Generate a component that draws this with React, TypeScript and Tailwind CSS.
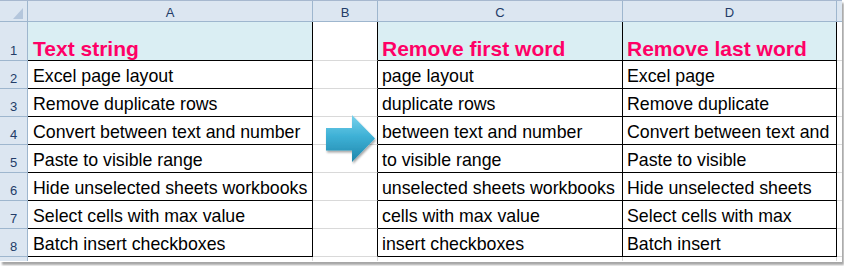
import React from "react";

const rows: [string, string, string][] = [
  ["Excel page layout", "page layout", "Excel page"],
  ["Remove duplicate rows", "duplicate rows", "Remove duplicate"],
  ["Convert between text and number", "between text and number", "Convert between text and"],
  ["Paste to visible range", "to visible range", "Paste to visible"],
  ["Hide unselected sheets workbooks", "unselected sheets workbooks", "Hide unselected sheets"],
  ["Select cells with max value", "cells with max value", "Select cells with max"],
  ["Batch insert checkboxes", "insert checkboxes", "Batch insert"],
];

function Arrow() {
  return (
    <svg
      className="absolute left-[318px] top-[106px]"
      width="66"
      height="64"
      viewBox="0 0 66 64"
    >
      <defs>
        <linearGradient id="ag" x1="0" y1="0" x2="0" y2="1">
          <stop offset="0" stopColor="#7ad2ec" />
          <stop offset="0.45" stopColor="#3eb1d6" />
          <stop offset="1" stopColor="#1f86ab" />
        </linearGradient>
        <filter id="sh" x="-20%" y="-20%" width="140%" height="140%">
          <feGaussianBlur in="SourceAlpha" stdDeviation="1.2" />
          <feOffset dx="0.5" dy="1.5" result="b" />
          <feComponentTransfer>
            <feFuncA type="linear" slope="0.35" />
          </feComponentTransfer>
          <feMerge>
            <feMergeNode />
            <feMergeNode in="SourceGraphic" />
          </feMerge>
        </filter>
      </defs>
      <path
        d="M8 21 L34 21 L34 8 L57 31.5 L34 55 L34 43.5 L8 43.5 Z"
        fill="url(#ag)"
        filter="url(#sh)"
      />
    </svg>
  );
}

export default function App() {
  return (
    <div className="w-[844px] h-[266px] bg-white font-['Liberation_Sans',Arial,sans-serif]">
      <div className="relative w-[842px] h-[262px] bg-white shadow-[2px_3px_2px_rgba(0,0,0,0.35)] border-t border-[#a7b8cf] grid grid-cols-[28px_285px_65px_245px_214px_5px] grid-rows-[21px_39px_repeat(7,28px)_4px] overflow-hidden">
        {/* column header row */}
        <div className="bg-[#dce6f1] border-r border-b border-[#9eb6ce] relative">
          <svg className="absolute left-[12px] top-[6px]" width="12" height="13" viewBox="0 0 12 13">
            <path d="M11 1 L11 12 L1 12 Z" fill="#b4c6dc" />
          </svg>
        </div>
        <div className="bg-[#dce6f1] border-r border-b border-[#9eb6ce] flex items-end justify-center pb-[2px] text-[13px] leading-none text-[#233c68]">A</div>
        <div className="bg-[#dce6f1] border-r border-b border-[#9eb6ce] flex items-end justify-center pb-[2px] text-[13px] leading-none text-[#233c68]">B</div>
        <div className="bg-[#dce6f1] border-r border-b border-[#9eb6ce] flex items-end justify-center pb-[2px] text-[13px] leading-none text-[#233c68]">C</div>
        <div className="bg-[#dce6f1] border-r border-b border-[#9eb6ce] flex items-end justify-center pb-[2px] text-[13px] leading-none text-[#233c68]">D</div>
        <div className="bg-[#dce6f1] border-b border-[#9eb6ce]"></div>

        {/* row 1 */}
        <div className="bg-[#dce6f1] border-r border-b border-[#9eb6ce] flex items-end justify-center pb-[3px] text-[13px] leading-none text-[#233c68]">1</div>
        <div className="bg-[#daeef3] border-r border-b border-black flex items-end pl-[5px] pb-[1px] text-[21px] leading-none font-bold text-[#ff0066] whitespace-nowrap overflow-hidden">Text string</div>
        <div className="bg-white border-r border-black border-b border-b-[#d9d9d9]"></div>
        <div className="bg-[#daeef3] border-r border-b border-black flex items-end pl-[4px] pb-[1px] text-[21px] leading-none font-bold text-[#ff0066] whitespace-nowrap overflow-hidden">Remove first word</div>
        <div className="bg-[#daeef3] border-r border-b border-black flex items-end pl-[4px] pb-[1px] text-[21px] leading-none font-bold text-[#ff0066] whitespace-nowrap overflow-hidden">Remove last word</div>
        <div className="bg-white border-b border-[#d9d9d9]"></div>

        {rows.map((r, i) => (
          <React.Fragment key={i}>
            <div className="bg-[#dce6f1] border-r border-b border-[#9eb6ce] flex items-end justify-center pb-[3px] text-[13px] leading-none text-[#233c68]">{i + 2}</div>
            <div className="border-r border-b border-black flex items-end pl-[5px] pb-[2px] text-[17.75px] leading-none text-black whitespace-nowrap overflow-hidden">{r[0]}</div>
            <div className="border-r border-black border-b border-b-[#d9d9d9]"></div>
            <div className="border-r border-b border-black flex items-end pl-[4px] pb-[2px] text-[17.75px] leading-none text-black whitespace-nowrap overflow-hidden">{r[1]}</div>
            <div className="border-r border-b border-black flex items-end pl-[4px] pb-[2px] text-[17.75px] leading-none text-black whitespace-nowrap overflow-hidden">{r[2]}</div>
            <div className="border-b border-[#d9d9d9]"></div>
          </React.Fragment>
        ))}

        {/* partial row 9 */}
        <div className="bg-[#dce6f1] border-r border-[#9eb6ce]"></div>
        <div className="border-r border-[#d9d9d9]"></div>
        <div className="border-r border-[#d9d9d9]"></div>
        <div className="border-r border-[#d9d9d9]"></div>
        <div className="border-r border-[#d9d9d9]"></div>
        <div></div>

        <Arrow />
      </div>
    </div>
  );
}
